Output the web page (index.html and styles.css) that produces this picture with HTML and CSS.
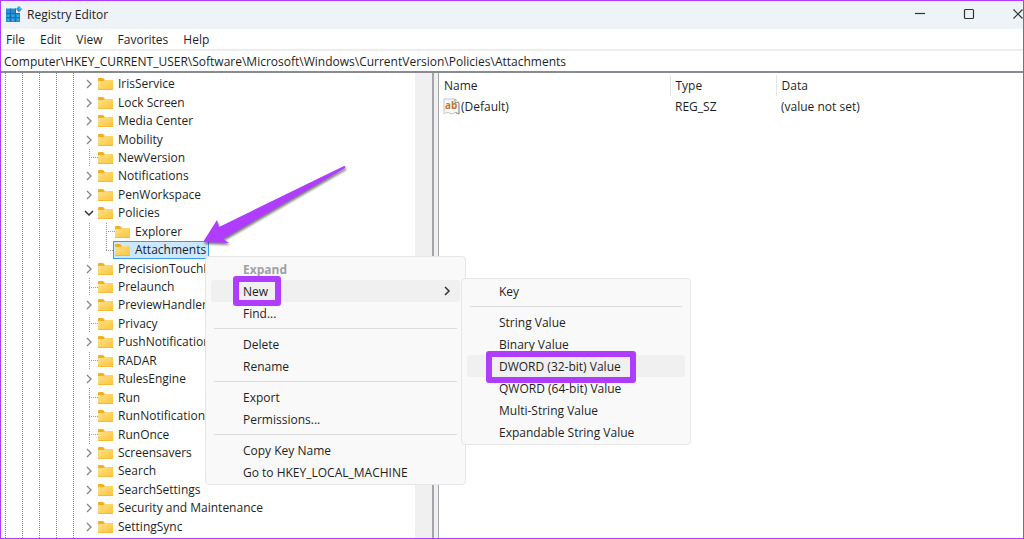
FILE: index.html
```html
<!DOCTYPE html>
<html lang="en">

<head>
    <meta charset="UTF-8">
    <meta name="viewport" content="width=device-width, initial-scale=1.0">
    <title>Registry Editor</title>
    <link rel="stylesheet" href="styles.css">
</head>

<body>
    <!-- shared icons -->
    <svg class="symbols" aria-hidden="true">
        <defs>
            <linearGradient id="folder-fill" x1="0" y1="0" x2="1" y2="1">
                <stop offset="0" stop-color="#ffe08c" />
                <stop offset="1" stop-color="#fbc537" />
            </linearGradient>
            <symbol id="folder" viewBox="0 0 15 14" preserveAspectRatio="none">
                <path d="M0 1.500 Q0 1 1 1 H5 L7 3 H15 V6 H0 Z" fill="#f5ae1c" />
                <path d="M0 4 H5.500 L7 3 H15 V13 H0 Z" fill="url(#folder-fill)" />
                <path d="M0 12.500 H15" stroke="#f3bb3c" stroke-width="1" />
            </symbol>
            <symbol id="chevron" viewBox="0 0 16 16">
                <path d="M6 4 L10 8 L6 12" fill="none" stroke="#858585" stroke-width="1.3" />
            </symbol>
            <symbol id="chevron-open" viewBox="0 0 16 16">
                <path d="M4 6 L8 10 L12 6" fill="none" stroke="#333" stroke-width="1.5" />
            </symbol>
        </defs>
    </svg>

    <div class="window">
        <header class="titlebar">
            <svg class="app-icon" viewBox="0 0 17 17" aria-hidden="true">
                <path d="M1 2.500 H11 V7 H15 V16 H1 Z" fill="#1f8fd6" />
                <path d="M1 7.500 H15 M1 11.500 H15 M5.500 2.500 V16 M10.500 2.500 V16" stroke="#1268a6" stroke-width="0.8" />
                <path d="M2.500 14 H4 M7 14 H8.500 M12 14 H13.500 M2.500 10 H4 M7 10 H8.500 M12 10 H13.500" stroke="#7cc8f2" />
                <path d="M14 0 L17 3 L14 6.500 L11 3 Z" fill="#2497dd" />
                <path d="M14 0 L17 3 L14 3 Z" fill="#62bff0" />
            </svg>
            <h1>Registry Editor</h1>
            <div class="controls">
                <button type="button" aria-label="Minimize">
                    <svg viewBox="0 0 12 12"><path d="M1 5.500 H11" /></svg>
                </button>
                <button type="button" aria-label="Maximize">
                    <svg viewBox="0 0 12 12"><rect x="1.500" y="1.500" width="9" height="9" rx="1" /></svg>
                </button>
                <button type="button" aria-label="Close">
                    <svg viewBox="0 0 12 12"><path d="M1.500 1.500 L10.500 10.500 M10.500 1.500 L1.500 10.500" /></svg>
                </button>
            </div>
        </header>

        <nav class="menubar">
            <button type="button">File</button>
            <button type="button">Edit</button>
            <button type="button">View</button>
            <button type="button">Favorites</button>
            <button type="button">Help</button>
        </nav>

        <input class="address" type="text" aria-label="Address" value="Computer\HKEY_CURRENT_USER\Software\Microsoft\Windows\CurrentVersion\Policies\Attachments">

        <main class="panes">
            <div class="tree">
                <div class="guides"><span></span><span></span><span></span><span></span><span></span></div>
                <ul class="keys">
                    <li><button type="button" class="toggle" aria-label="Expand IrisService"><svg><use href="#chevron" /></svg></button><svg class="folder"><use href="#folder" /></svg><span class="name">IrisService</span></li>
                    <li><button type="button" class="toggle" aria-label="Expand Lock Screen"><svg><use href="#chevron" /></svg></button><svg class="folder"><use href="#folder" /></svg><span class="name">Lock Screen</span></li>
                    <li><button type="button" class="toggle" aria-label="Expand Media Center"><svg><use href="#chevron" /></svg></button><svg class="folder"><use href="#folder" /></svg><span class="name">Media Center</span></li>
                    <li><button type="button" class="toggle" aria-label="Expand Mobility"><svg><use href="#chevron" /></svg></button><svg class="folder"><use href="#folder" /></svg><span class="name">Mobility</span></li>
                    <li><span class="branch"></span><svg class="folder"><use href="#folder" /></svg><span class="name">NewVersion</span></li>
                    <li><button type="button" class="toggle" aria-label="Expand Notifications"><svg><use href="#chevron" /></svg></button><svg class="folder"><use href="#folder" /></svg><span class="name">Notifications</span></li>
                    <li><button type="button" class="toggle" aria-label="Expand PenWorkspace"><svg><use href="#chevron" /></svg></button><svg class="folder"><use href="#folder" /></svg><span class="name">PenWorkspace</span></li>
                    <li><button type="button" class="toggle" aria-label="Collapse Policies"><svg><use href="#chevron-open" /></svg></button><svg class="folder"><use href="#folder" /></svg><span class="name">Policies</span></li>
                    <li><span class="branch through"></span><span class="branch"></span><svg class="folder"><use href="#folder" /></svg><span class="name">Explorer</span></li>
                    <li><span class="branch through"></span><span class="branch last"></span><span class="selected"><svg class="folder"><use href="#folder" /></svg><span class="name">Attachments</span></span></li>
                    <li><button type="button" class="toggle" aria-label="Expand PrecisionTouchPad"><svg><use href="#chevron" /></svg></button><svg class="folder"><use href="#folder" /></svg><span class="name">PrecisionTouchP</span></li>
                    <li><span class="branch"></span><svg class="folder"><use href="#folder" /></svg><span class="name">Prelaunch</span></li>
                    <li><button type="button" class="toggle" aria-label="Expand PreviewHandlers"><svg><use href="#chevron" /></svg></button><svg class="folder"><use href="#folder" /></svg><span class="name">PreviewHandler</span></li>
                    <li><span class="branch"></span><svg class="folder"><use href="#folder" /></svg><span class="name">Privacy</span></li>
                    <li><button type="button" class="toggle" aria-label="Expand PushNotifications"><svg><use href="#chevron" /></svg></button><svg class="folder"><use href="#folder" /></svg><span class="name">PushNotification</span></li>
                    <li><span class="branch"></span><svg class="folder"><use href="#folder" /></svg><span class="name">RADAR</span></li>
                    <li><button type="button" class="toggle" aria-label="Expand RulesEngine"><svg><use href="#chevron" /></svg></button><svg class="folder"><use href="#folder" /></svg><span class="name">RulesEngine</span></li>
                    <li><span class="branch"></span><svg class="folder"><use href="#folder" /></svg><span class="name">Run</span></li>
                    <li><span class="branch"></span><svg class="folder"><use href="#folder" /></svg><span class="name">RunNotification</span></li>
                    <li><span class="branch"></span><svg class="folder"><use href="#folder" /></svg><span class="name">RunOnce</span></li>
                    <li><button type="button" class="toggle" aria-label="Expand Screensavers"><svg><use href="#chevron" /></svg></button><svg class="folder"><use href="#folder" /></svg><span class="name">Screensavers</span></li>
                    <li><button type="button" class="toggle" aria-label="Expand Search"><svg><use href="#chevron" /></svg></button><svg class="folder"><use href="#folder" /></svg><span class="name">Search</span></li>
                    <li><button type="button" class="toggle" aria-label="Expand SearchSettings"><svg><use href="#chevron" /></svg></button><svg class="folder"><use href="#folder" /></svg><span class="name">SearchSettings</span></li>
                    <li><button type="button" class="toggle" aria-label="Expand Security and Maintenance"><svg><use href="#chevron" /></svg></button><svg class="folder"><use href="#folder" /></svg><span class="name">Security and Maintenance</span></li>
                    <li><button type="button" class="toggle" aria-label="Expand SettingSync"><svg><use href="#chevron" /></svg></button><svg class="folder"><use href="#folder" /></svg><span class="name">SettingSync</span></li>
                </ul>
                <div class="scrollbar"></div>
            </div>
            <div class="splitter"></div>
            <div class="values">
                <table>
                    <thead>
                        <tr>
                            <th class="col-name">Name</th>
                            <th class="col-type">Type</th>
                            <th>Data</th>
                        </tr>
                    </thead>
                    <tbody>
                        <tr>
                            <td>
                                <div class="value-name">
                                    <svg viewBox="0 0 17 17" aria-hidden="true">
                                        <path d="M1 1 H12 L16 4.500 V16 L12.500 14.500 L9 16 L5 14.500 L1 15.500 Z" fill="#fbfbfb" stroke="#c4c4c4" />
                                        <path d="M12 1 V4.500 H16 M16 5 V16 L12.500 14.500" fill="none" stroke="#8f8f8f" />
                                        <text x="2" y="11">ab</text>
                                    </svg>
                                    <span>(Default)</span>
                                </div>
                            </td>
                            <td>REG_SZ</td>
                            <td>(value not set)</td>
                        </tr>
                    </tbody>
                </table>
            </div>
        </main>

        <div class="menu context-menu">
            <button type="button" class="default" disabled>Expand</button>
            <button type="button" class="active">New
                <span class="mark mark-new"></span>
                <svg viewBox="0 0 16 16" aria-hidden="true"><path d="M6 4 L10 8 L6 12" /></svg>
            </button>
            <button type="button">Find...</button>
            <hr>
            <button type="button">Delete</button>
            <button type="button">Rename</button>
            <hr>
            <button type="button">Export</button>
            <button type="button">Permissions...</button>
            <hr>
            <button type="button">Copy Key Name</button>
            <button type="button">Go to HKEY_LOCAL_MACHINE</button>
        </div>

        <div class="menu submenu">
            <button type="button">Key</button>
            <hr>
            <button type="button">String Value</button>
            <button type="button">Binary Value</button>
            <button type="button" class="active">DWORD (32-bit) Value
                <span class="mark mark-dword"></span>
            </button>
            <button type="button">QWORD (64-bit) Value</button>
            <button type="button">Multi-String Value</button>
            <button type="button">Expandable String Value</button>
        </div>

        <svg class="arrow" viewBox="0 0 150 84" aria-hidden="true">
            <path d="M2 78 L16 56 L18 63 L143 2 Q145 2 144 4 L22 75 L28 79 Z" />
        </svg>
    </div>
</body>

</html>
```

FILE: styles.css
```css
* {
    box-sizing: border-box;
}

body {
    margin: 0;
    font-family: "Open Sans", "Noto Sans", sans-serif;
    font-size: 12px;
    color: #1f1f1f;
}

button,
input {
    margin: 0;
    padding: 0;
    border: 0;
    background: none;
    font: inherit;
    color: inherit;
}

.symbols {
    position: absolute;
    width: 0;
    height: 0;
}

.window {
    position: relative;
    display: flex;
    flex-direction: column;
    height: 100vh;
    overflow: hidden;
    border: 1px solid #b03cff;
    background: #fff;
}

/* title bar */
.titlebar {
    display: flex;
    align-items: center;
    height: 28px;
    padding: 0 0 2px 4px;
    background: #eef3f8;
}

.app-icon {
    width: 17px;
    height: 17px;
}

h1 {
    margin: 0 auto 0 5px;
    font-size: 12px;
    font-weight: normal;
}

.controls {
    display: flex;
    flex: none;
    gap: 37px;
    margin-right: -1px;
}

.controls button {
    display: flex;
}

.controls svg {
    width: 12px;
    height: 12px;
    fill: none;
    stroke: #333;
    stroke-width: 1.2;
}

.menubar {
    display: flex;
    gap: 15px;
    height: 22px;
    padding-left: 5px;
    border-bottom: 2px solid #eee;
}

.address {
    height: 22px;
    padding-left: 3px;
    border-bottom: 2px solid #888c92;
    outline: none;
}

/* panes */
.panes {
    display: flex;
    flex: 1;
    min-height: 0;
}

.tree {
    display: flex;
    width: 431px;
}

.guides {
    display: flex;
    flex: none;
    width: 80px;
    padding-left: 4px;
}

.guides span {
    flex: none;
    width: 17px;
    border-left: 1px dotted #8a8a8a;
}

.keys {
    display: flex;
    flex: 1;
    flex-direction: column;
    margin: 0;
    padding: 2px 0;
    list-style: none;
}

.keys li {
    display: flex;
    flex: 1;
    align-items: center;
    min-height: 0;
    line-height: 16px;
    white-space: nowrap;
}

.toggle {
    display: flex;
    width: 17px;
}

.toggle svg {
    width: 16px;
    height: 16px;
}

.branch {
    align-self: stretch;
    width: 9px;
    margin-left: 8px;
    background:
        repeating-linear-gradient(#999 0 1px, transparent 1px 2px) 0 0 / 1px 100% no-repeat,
        repeating-linear-gradient(90deg, #999 0 1px, transparent 1px 2px) 0 50% / 100% 1px no-repeat;
}

.branch.through {
    background-size: 1px 100%, 0 0;
}

.branch.last {
    background-size: 1px 50%, 100% 1px;
}

.branch + .selected {
    margin-left: -2px;
}

.folder {
    flex: none;
    width: 15px;
    height: 14px;
}

.name {
    margin-left: 5px;
}

.selected {
    display: flex;
    align-items: center;
    height: 18px;
    padding: 0 2px 0 1px;
    border: 1px solid #3d9be0;
    background: #cce8ff;
}

.scrollbar {
    flex: none;
    width: 17px;
    background: #f0f0f0;
}

.splitter {
    flex: none;
    width: 7px;
    border: solid #a3a5aa;
    border-width: 0 1px 0 2px;
    background: #f0f0f0;
}

.values {
    flex: 1;
    padding-top: 2px;
}

table {
    width: 100%;
    table-layout: fixed;
    border-collapse: collapse;
}

th,
td {
    height: 21px;
    padding: 0 0 0 5px;
    font-weight: normal;
    text-align: left;
    line-height: 16px;
}

th {
    border-right: 1px solid #e5e5e5;
}

th:last-child {
    border-right: 0;
}

.col-name {
    width: 231px;
}

.col-type {
    width: 106px;
}

.value-name {
    display: flex;
    align-items: center;
    gap: 1px;
    margin-left: -1px;
}

.value-name svg {
    width: 17px;
    height: 17px;
}

.value-name text {
    font-size: 10px;
    font-weight: bold;
    fill: #c87424;
}

/* popup menus */
.menu {
    position: absolute;
    display: flex;
    flex-direction: column;
    padding: 1px 5px;
    border: 1px solid #e6e6e6;
    border-radius: 4px;
    background: #f9f9f9;
}

.context-menu {
    top: 255px;
    left: 204px;
    width: 261px;
}

.submenu {
    top: 277px;
    left: 460px;
    width: 230px;
}

.menu button {
    position: relative;
    display: flex;
    align-items: center;
    justify-content: space-between;
    height: 22px;
    padding: 0 5px 0 32px;
    border-radius: 3px;
    white-space: nowrap;
}

.menu .active {
    background: #f0f0f0;
}

.menu .default {
    font-weight: bold;
    color: #a0a0a0;
}

.menu hr {
    width: calc(100% - 6px);
    height: 1px;
    margin: 4px 3px;
    border: 0;
    background: #dcdcdc;
}

.menu svg {
    width: 16px;
    height: 16px;
    fill: none;
    stroke: #333;
    stroke-width: 1.5;
}

/* highlight frames and arrow */
.mark {
    position: absolute;
    z-index: 1;
    border: 6px solid #b03cff;
    border-radius: 3px;
}

.mark-new {
    top: -4px;
    left: 22px;
    width: 48px;
    height: 30px;
}

.mark-dword {
    top: -4px;
    left: 19px;
    width: 150px;
    height: 32px;
}

.arrow {
    position: absolute;
    top: 163px;
    left: 200px;
    width: 150px;
    height: 84px;
    fill: #b03cff;
    filter: drop-shadow(1px 2px 1px rgba(0, 0, 0, 0.5));
}
```
